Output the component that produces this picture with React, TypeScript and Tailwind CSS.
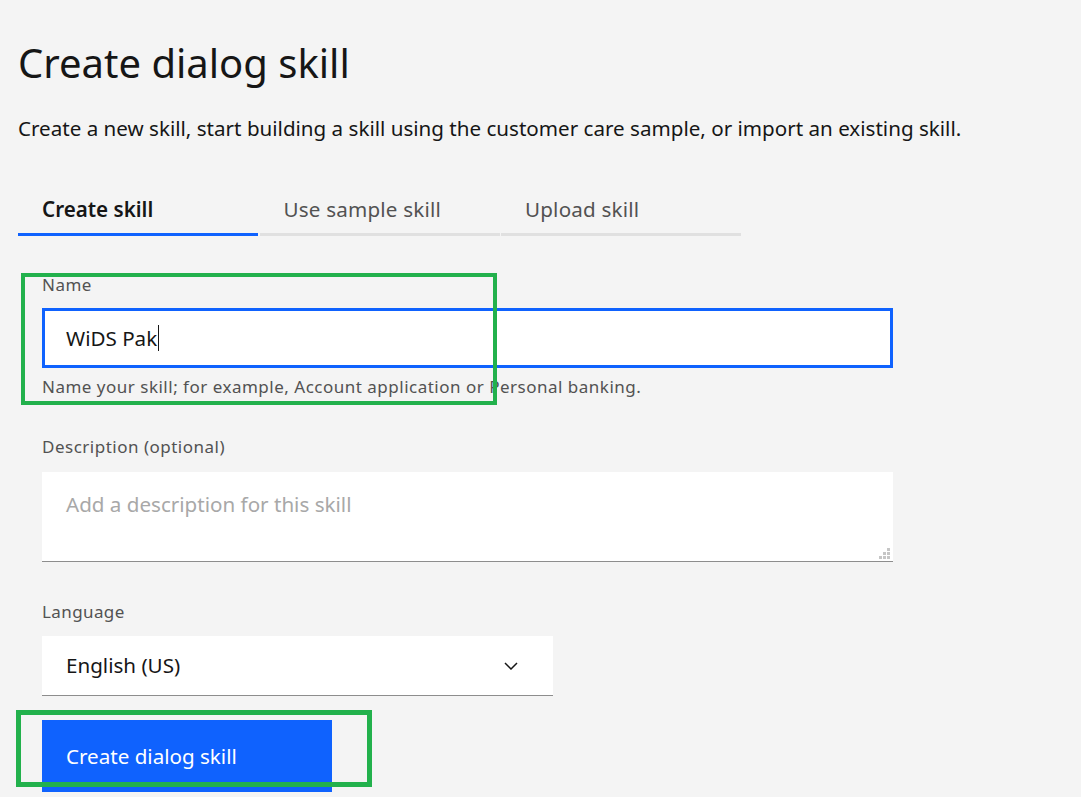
import React from 'react';

const tabs = ['Create skill', 'Use sample skill', 'Upload skill'];

const App = () => {
  return (
    <div
      className="relative h-[797px] overflow-hidden bg-[#f4f4f4] text-[#161616]"
      style={{ fontFamily: '"Noto Sans", Roboto, Arial, sans-serif' }}
    >
      <div className="pl-[18px]">
        <h1 className="pt-[38px] text-[40px] leading-[50px] font-normal">Create dialog skill</h1>
        <p className="mt-[26px] text-[20.6px] leading-[28px]">
          Create a new skill, start building a skill using the customer care sample, or import an existing skill.
        </p>

        <div className="mt-[41px] flex gap-[1.5px]">
          {tabs.map((tab, i) => (
            <div
              key={tab}
              className={
                i === 0
                  ? 'w-[240px] border-b-[3px] border-[#0f62fe] pl-[24px] pt-[12px] pb-[10px] text-[20.6px] leading-[28px] font-semibold text-[#161616]'
                  : 'w-[240px] border-b-[3px] border-[#e0e0e0] pl-[24px] pt-[12px] pb-[10px] text-[20.6px] leading-[28px] tracking-[0.2px] text-[#525252]'
              }
            >
              {tab}
            </div>
          ))}
        </div>

        <form className="pl-[24px]">
          {/* name */}
          <label className="mt-[39px] block text-[17px] leading-[20px] tracking-[0.5px] text-[#525252]">Name</label>
          <div className="mt-[13px] flex h-[60px] w-[851px] items-center border-[3px] border-[#0f62fe] bg-white pl-[21px] text-[20.6px]">
            <span>WiDS Pak</span>
            <span className="ml-[1px] h-[26px] w-px bg-[#161616]"></span>
          </div>
          <p className="mt-[9px] text-[17px] leading-[20px] tracking-[0.5px] text-[#525252]">
            Name your skill; for example, Account application or Personal banking.
          </p>

          {/* description */}
          <label className="mt-[40px] block text-[17px] leading-[20px] tracking-[0.5px] text-[#525252]">
            Description (optional)
          </label>
          <div className="relative mt-[15px] h-[90px] w-[851px] border-b border-[#8d8d8d] bg-white pl-[24px] pt-[18px] text-[20.6px] leading-[28px] text-[#a8a8a8]">
            Add a description for this skill
            <svg className="absolute right-[3px] bottom-[2px]" width="11" height="11" viewBox="0 0 11 11">
              <rect x="8" y="0" width="3" height="3" fill="#c6c6c6" />
              <rect x="4" y="4" width="3" height="3" fill="#c6c6c6" />
              <rect x="8" y="4" width="3" height="3" fill="#c6c6c6" />
              <rect x="0" y="8" width="3" height="3" fill="#c6c6c6" />
              <rect x="4" y="8" width="3" height="3" fill="#c6c6c6" />
              <rect x="8" y="8" width="3" height="3" fill="#c6c6c6" />
            </svg>
          </div>

          {/* language */}
          <label className="mt-[40px] block text-[17px] leading-[20px] tracking-[0.4px] text-[#525252]">Language</label>
          <div className="mt-[14px] flex h-[60px] w-[511px] items-center justify-between border-b border-[#8d8d8d] bg-white pl-[24px] pr-[35px] text-[20.6px]">
            <span>English (US)</span>
            <svg width="14" height="8" viewBox="0 0 14 8" fill="none">
              <path d="M1 1l6 6 6-6" stroke="#161616" strokeWidth="1.5" />
            </svg>
          </div>

          <button
            type="button"
            className="mt-[24px] flex h-[72px] w-[290px] items-center bg-[#0f62fe] pl-[24px] text-left text-[20.6px] text-white"
          >
            Create dialog skill
          </button>
        </form>
      </div>

      {/* annotation boxes */}
      <div className="pointer-events-none absolute left-[21px] top-[273px] h-[132px] w-[476px] border-[4px] border-[#22b14c]"></div>
      <div className="pointer-events-none absolute left-[16px] top-[710px] h-[77px] w-[356px] border-[5px] border-[#22b14c]"></div>
    </div>
  );
};

export default App;
